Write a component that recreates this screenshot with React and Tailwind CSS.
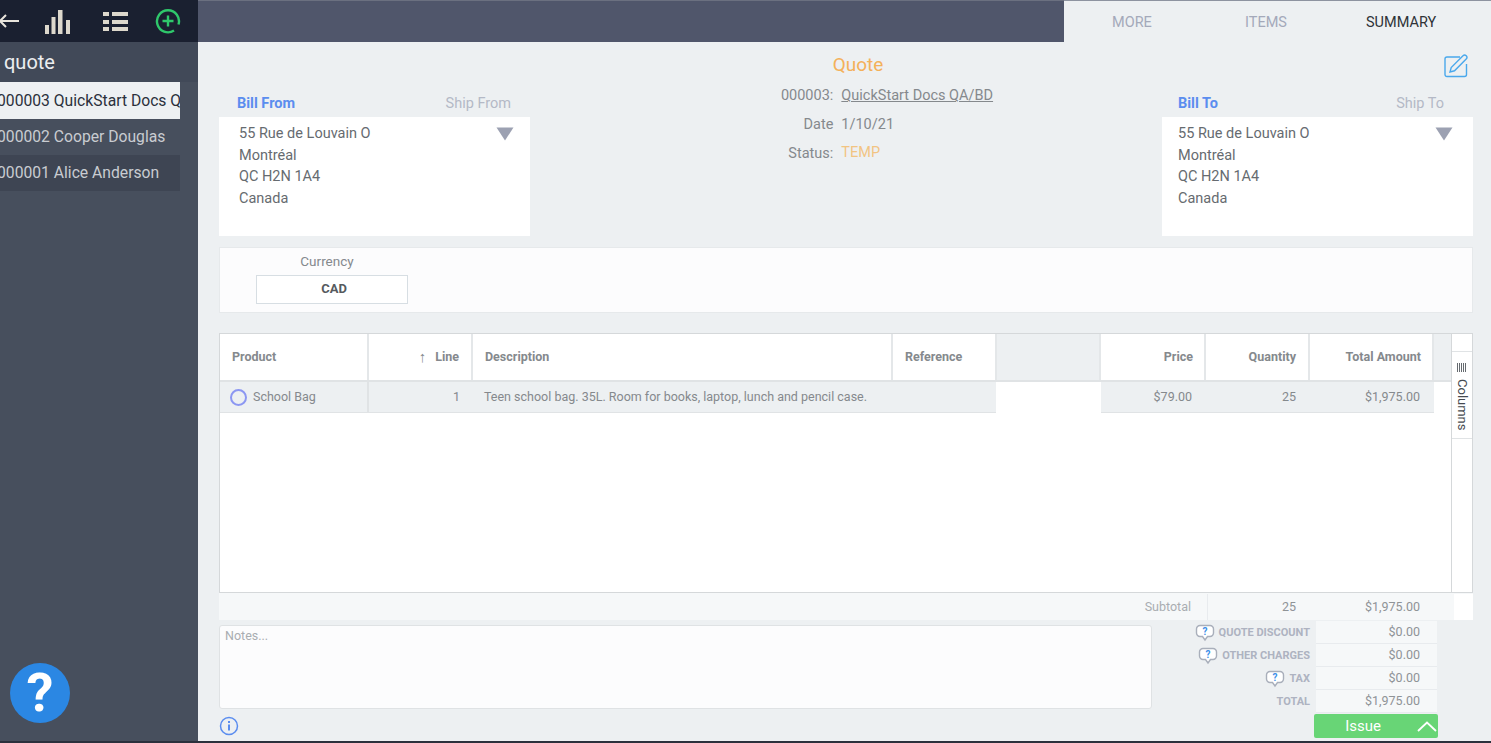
import React from 'react';

function HintIcon() {
  return (
    <svg width="20" height="19" viewBox="0 0 20 19" className="shrink-0">
      <path d="M5 1.500h10a3.500 3.500 0 0 1 3.500 3.500v4a3.500 3.500 0 0 1-3.500 3.500h-2.500L10 16l-2.500-3.500H5A3.500 3.500 0 0 1 1.500 9V5A3.500 3.500 0 0 1 5 1.500z" fill="#fff" stroke="#a9afbb" strokeWidth="1.400" />
      <text x="10" y="10.500" textAnchor="middle" fontSize="10" fontWeight="700" fill="#3d8fe8" fontFamily="Roboto, sans-serif">?</text>
    </svg>
  );
}

function Address({ first, second, headPad, bodyPad, arrowPos }) {
  return (
    <div className="w-[311px]">
      <div className={`flex h-[33px] items-center justify-between pt-[6px] text-[14.500px] ${headPad}`}>
        <span className="font-bold text-[#5b8def]">{first}</span>
        <span className="text-[#b4b9c6]">{second}</span>
      </div>
      <div className={`relative h-[119px] bg-white pt-[6px] text-[14.500px] leading-[21.700px] text-[#666b70] ${bodyPad}`}>
        <p>55 Rue de Louvain O</p>
        <p>Montréal</p>
        <p>QC H2N 1A4</p>
        <p>Canada</p>
        <svg width="18" height="14" viewBox="0 0 18 14" className={`absolute top-[10px] ${arrowPos}`}>
          <path d="M0.500 0.500h17L9 13.500z" fill="#9ca1b2" />
        </svg>
      </div>
    </div>
  );
}

function HeadCell({ width, align, children }) {
  return (
    <div className={`flex h-full items-center border-r-2 border-[#e4e7e9] bg-white text-[12.500px] font-bold text-[#85898d] ${align === 'right' ? 'justify-end pr-[11px]' : 'pl-[12px]'} ${width}`}>
      {children}
    </div>
  );
}

function TotalRow({ label, value, hint }) {
  return (
    <div className="flex h-[23px] items-center">
      <div className="flex w-[160px] items-center justify-end gap-[4px] pr-[6px] pt-[1px] text-[11px] font-bold text-[#aeb3c1]">
        {hint && <HintIcon />}
        <span>{label}</span>
      </div>
      <div className="flex h-full w-[121px] items-center justify-end border-b border-[#e8ebee] bg-[#f6f8f9] pr-[17px] text-[12.500px] text-[#8f9397]">
        {value}
      </div>
    </div>
  );
}

export default function App() {
  return (
    <div className="flex h-[743px] w-[1491px] overflow-hidden bg-[#2b303c] font-['Roboto',sans-serif]">
      <aside className="relative h-[741px] w-[198px] shrink-0 bg-[#474f5d]">
        <div className="flex h-[42px] items-center bg-[#1a2030]">
          <svg width="22" height="16" viewBox="0 0 22 16" fill="none" stroke="#e8e4dc" strokeWidth="2" className="ml-[-2px]">
            <path d="M21 8H2M8 2 2 8l6 6" />
          </svg>
          <svg width="26" height="26" viewBox="0 0 26 26" fill="#ddd8cc" className="ml-[25px]">
            <rect x="0" y="17" width="4" height="9" />
            <rect x="6.500" y="9" width="4" height="17" />
            <rect x="13" y="2" width="4.500" height="24" />
            <rect x="21" y="12" width="4" height="14" />
          </svg>
          <svg width="26" height="22" viewBox="0 0 26 22" fill="#ddd8cc" className="ml-[32px]">
            <rect x="0" y="2" width="6" height="4" />
            <rect x="9" y="2" width="16" height="4" />
            <rect x="0" y="10" width="6" height="4" />
            <rect x="9" y="10" width="16" height="4" />
            <rect x="0" y="17" width="6" height="4" />
            <rect x="9" y="17" width="16" height="4" />
          </svg>
          <svg width="26" height="26" viewBox="0 0 26 26" fill="none" stroke="#2fc76b" strokeWidth="2.400" className="ml-[26px]">
            <path d="M19 22.500A11 11 0 1 1 23.500 16.500" />
            <path d="M13 7.500v11M7.500 13h11" />
          </svg>
        </div>
        <div className="h-[40px] bg-[#414958] pl-[4px] text-[20px] leading-[40px] text-[#eceef0]">quote</div>
        <div className="w-[180px] text-[15.700px]">
          <div className="h-[37px] overflow-hidden whitespace-nowrap bg-[#edf0f2] leading-[37px] text-[#2b303c]">
            <span className="ml-[-3px]">000003 QuickStart Docs QA/BD</span>
          </div>
          <div className="h-[36px] overflow-hidden whitespace-nowrap leading-[36px] text-[#c9ccd1]">
            <span className="ml-[-3px]">000002 Cooper Douglas</span>
          </div>
          <div className="h-[36px] overflow-hidden whitespace-nowrap bg-[#3e4553] leading-[36px] text-[#c9ccd1]">
            <span className="ml-[-3px]">000001 Alice Anderson</span>
          </div>
        </div>
        <div className="absolute left-[10px] top-[663px] flex h-[60px] w-[60px] items-center justify-center rounded-full bg-[#2b87e3] text-[54px] font-bold leading-none text-white">?</div>
      </aside>

      <main className="flex h-[741px] flex-1 flex-col bg-[#edf0f2]">
        <div className="flex h-[42px] shrink-0">
          <div className="flex-1 border-t border-[#6b7080] bg-[#50566b]" />
          <div className="flex w-[427px] items-center border-t border-[#8d93a0] pt-[2px] text-[14.500px]">
            <span className="w-[134px] pl-[48px] text-[#a4a9ba]">MORE</span>
            <span className="w-[135px] pl-[47px] text-[#a4a9ba]">ITEMS</span>
            <span className="pl-[33px] text-[#2f3338]">SUMMARY</span>
          </div>
        </div>

        <div className="flex flex-1 flex-col pl-[21px] pr-[18px]">
          <div className="relative flex justify-between pt-[42px]">
            <Address first="Bill From" second="Ship From" headPad="pl-[18px] pr-[19px]" bodyPad="pl-[20px]" arrowPos="right-[16px]" />
            <div className="absolute left-[311px] right-[311px] top-0 flex flex-col items-center text-[14.500px] text-[#85898d]">
              <div className="ml-[24px] mt-[12px] text-[19px] leading-[22px] text-[#f4b15a]">Quote</div>
              <div className="ml-[82px] mt-[10px] grid grid-cols-[auto_auto] gap-x-[8px] gap-y-[9px] leading-[20px]">
                <span className="text-right">000003:</span>
                <span className="underline">QuickStart Docs QA/BD</span>
                <span className="text-right">Date</span>
                <span>1/10/21</span>
                <span className="text-right">Status:</span>
                <span className="mt-[-1px] text-[#f2c482]">TEMP</span>
              </div>
            </div>
            <svg width="24" height="24" viewBox="0 0 24 24" fill="none" stroke="#4aa8ec" strokeWidth="1.400" className="absolute right-[5px] top-[12px]">
              <path d="M22.500 10v10.500a2 2 0 0 1-2 2H3a2 2 0 0 1-2-2V5a2 2 0 0 1 2-2h13" />
              <path d="M6 18l1.200-4.500L19 1.800a1.800 1.800 0 0 1 3.200 3.200L10.500 16.800z" />
            </svg>
            <Address first="Bill To" second="Ship To" headPad="pl-[16px] pr-[29px]" bodyPad="pl-[16px]" arrowPos="right-[20px]" />
          </div>

          <div className="mt-[11px] h-[66px] border border-[#e6e9eb] bg-[#fcfcfd] pl-[36px]">
            <div className="ml-[-1px] w-[152px] pr-[8px] pt-[5px] text-center text-[13.500px] leading-[17px] text-[#85898d]">Currency</div>
            <div className="mt-[5px] flex h-[29px] w-[152px] items-center justify-center border border-[#d7dee3] bg-white pb-[1px] pl-[4px] text-[13px] font-bold text-[#565a5e]">CAD</div>
          </div>

          <div className="mt-[20px] flex h-[260px] border border-[#d5d8da] bg-white">
            <div className="flex flex-1 flex-col">
              <div className="flex h-[48px] shrink-0 border-b-2 border-[#e0e3e5]">
                <HeadCell width="w-[149px]">Product</HeadCell>
                <HeadCell width="w-[104px]" align="right">
                  <span className="mr-[9px] text-[15px] font-normal">↑</span>
                  <span className="mr-[1px]">Line</span>
                </HeadCell>
                <HeadCell width="w-[420px]">Description</HeadCell>
                <HeadCell width="w-[104px]">Reference</HeadCell>
                <div className="w-[104px] border-r-2 border-[#e4e7e9] bg-[#edf0f2]" />
                <HeadCell width="w-[105px]" align="right">Price</HeadCell>
                <HeadCell width="w-[104px]" align="right">
                  <span className="mr-[1px]">Quantity</span>
                </HeadCell>
                <HeadCell width="w-[124px]" align="right">Total Amount</HeadCell>
                <div className="flex-1 bg-[#edf0f2]" />
              </div>
              <div className="flex h-[31px] text-[12.500px] text-[#85898d]">
                <div className="flex w-[149px] items-center gap-[6px] border-b border-r-2 border-[#e0e3e5] bg-[#edf0f2] pl-[10px]">
                  <span className="h-[17px] w-[17px] rounded-full border-2 border-[#8c97f2]" />
                  School Bag
                </div>
                <div className="flex w-[104px] items-center justify-end border-b border-[#e0e3e5] bg-[#edf0f2] pr-[13px]">1</div>
                <div className="flex w-[523px] items-center border-b border-[#e0e3e5] bg-[#edf0f2] pl-[11px]">
                  Teen school bag. 35L. Room for books, laptop, lunch and pencil case.
                </div>
                <div className="w-[105px]" />
                <div className="flex w-[105px] items-center justify-end border-b border-[#e0e3e5] bg-[#edf0f2] pr-[14px]">$79.00</div>
                <div className="flex w-[103px] items-center justify-end border-b border-[#e0e3e5] bg-[#edf0f2] pr-[13px]">25</div>
                <div className="flex w-[125px] items-center justify-end border-b border-[#e0e3e5] bg-[#edf0f2] pr-[14px]">$1,975.00</div>
              </div>
            </div>
            <div className="w-[21px] shrink-0 border-l border-[#d5d8da] pt-[17px]">
              <div className="flex h-[88px] flex-col items-center border-y border-[#e0e3e5] pt-[11px] pr-[1px] text-[13px] text-[#454a50]">
                <span className="mb-[7px] h-[9px] w-[9px] border-x border-[#666b70] bg-[linear-gradient(90deg,transparent_0_1px,#666b70_1px_2px,transparent_2px_3px,#666b70_3px_4px,transparent_4px_5px,#666b70_5px_6px,transparent_6px)]" />
                <span className="leading-[20px] [writing-mode:vertical-rl]">Columns</span>
              </div>
            </div>
          </div>

          <div className="flex h-[28px] items-center border-b border-[#edf0f2] bg-[#f6f8f9] pt-[1px] text-[12.500px] text-[#8f9397]">
            <div className="w-[972px] text-right text-[#a9adb1]">Subtotal</div>
            <div className="ml-[16px] h-full border-l border-[#e8ebee]" />
            <div className="w-[88px] text-right">25</div>
            <div className="w-[124px] text-right">$1,975.00</div>
            <div className="ml-[33px] h-full flex-1" />
            <div className="h-full w-[19px] bg-white" />
          </div>

          <div className="flex flex-1 justify-between">
            <div className="flex w-[933px] flex-col pt-[4px]">
              <div className="h-[84px] rounded-[3px] border border-[#dfe2e4] bg-[#fcfcfd] pl-[5px] pt-[2px] text-[12.500px] leading-[15px] text-[#a9adb1]">Notes...</div>
              <svg width="20" height="20" viewBox="0 0 20 20" fill="none" stroke="#5b8def" strokeWidth="1.500" className="mt-[7px]">
                <circle cx="10" cy="10" r="8.500" />
                <path d="M10 8.500v6" strokeWidth="2" />
                <path d="M10 5v2" strokeWidth="2" />
              </svg>
            </div>
            <div className="mr-[36px] flex flex-col">
              <TotalRow label="QUOTE DISCOUNT" value="$0.00" hint />
              <TotalRow label="OTHER CHARGES" value="$0.00" hint />
              <TotalRow label="TAX" value="$0.00" hint />
              <TotalRow label="TOTAL" value="$1,975.00" />
              <div className="ml-[158px] mr-[-1px] mt-[1px] flex h-[24px] w-[124px] items-center rounded-[2px] bg-[#68d576] text-[15px] text-white">
                <span className="w-[67px] text-right">Issue</span>
                <svg width="20" height="11" viewBox="0 0 20 11" fill="none" stroke="#fff" strokeWidth="1.800" className="ml-[36px]">
                  <path d="M1 10 10 1.500 19 10" />
                </svg>
              </div>
            </div>
          </div>
        </div>
      </main>
    </div>
  );
}
